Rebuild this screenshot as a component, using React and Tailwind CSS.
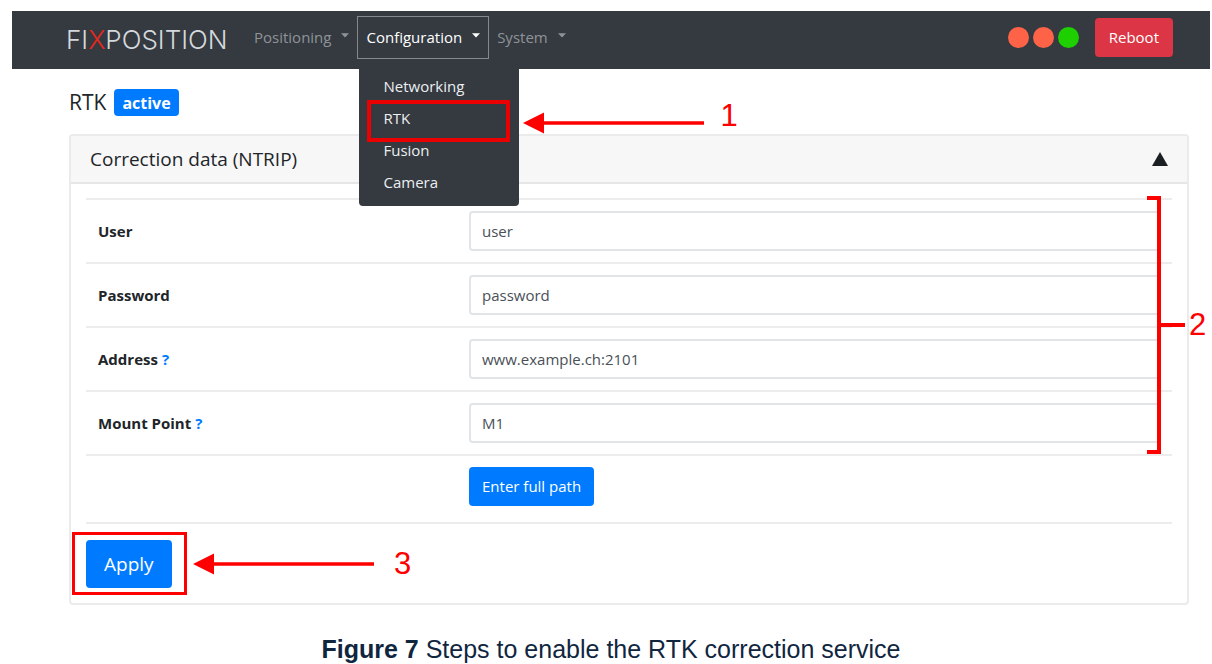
import React from "react";

const fields = [
  { id: "user", label: "User", value: "user" },
  { id: "password", label: "Password", value: "password" },
  { id: "address", label: "Address", value: "www.example.ch:2101", help: true },
  { id: "mount", label: "Mount Point", value: "M1", help: true },
];

function Caret() {
  return (
    <svg width="8" height="5" viewBox="0 0 8 5" fill="currentColor" aria-hidden="true" className="mb-1">
      <path d="M0 0.3h8L4 4.6z" />
    </svg>
  );
}

function Arrow() {
  return (
    <svg width="181" height="22" viewBox="0 0 181 22" fill="#fe0000" aria-hidden="true" className="shrink-0">
      <path d="M0 11L21 0.5V9.2H181V12.8H21V21.5z" />
    </svg>
  );
}

function StepNumber({ children }) {
  return <span className="font-['Liberation_Sans',sans-serif] text-[31px] leading-8 text-[#fe0000]">{children}</span>;
}

function NavBar() {
  return (
    <nav className="flex h-[58px] items-center bg-[#343a40] pr-[37px] pb-[5px] pl-[54px] text-[15px]">
      <a href="#home" className="w-[180px] pt-1 font-['Inter',sans-serif] text-[26px] leading-8 font-light text-[#d5d8dc]">
        FI<span className="text-[#e8281e]">X</span>POSITION
      </a>
      <button className="flex h-[43px] items-center gap-2.5 px-2 text-[#8f9397]">
        Positioning <Caret />
      </button>
      <div className="relative">
        <button className="flex h-[43px] items-center gap-2.5 border border-[#85898d] px-2 text-white" aria-expanded="true">
          Configuration <Caret />
        </button>
        <ul className="absolute top-[46px] left-0.5 z-10 w-40 rounded-sm bg-[#343a40] py-2 text-[#eceef0]">
          <li><a href="#networking" className="block px-6 leading-8">Networking</a></li>
          <li className="relative">
            <a href="#rtk" className="block px-6 leading-8">RTK</a>
            <div className="absolute -top-0.5 left-2 h-[42px] w-[143px] border-4 border-[#ea0000]" />
            <div className="absolute -top-0.5 left-full ml-1 flex items-start gap-4">
              <div className="pt-3"><Arrow /></div>
              <StepNumber>1</StepNumber>
            </div>
          </li>
          <li><a href="#fusion" className="block px-6 leading-8">Fusion</a></li>
          <li><a href="#camera" className="block px-6 leading-8">Camera</a></li>
        </ul>
      </div>
      <button className="flex h-[43px] items-center gap-2.5 px-2 text-[#8f9397]">
        System <Caret />
      </button>
      <div className="ml-auto flex items-center gap-1">
        <span className="size-[21px] rounded-full bg-[#ff6347]" />
        <span className="size-[21px] rounded-full bg-[#ff6347]" />
        <span className="size-[21px] rounded-full bg-[#1fd000]" />
        <button className="ml-3 h-[39px] rounded bg-[#dc3545] px-[14px] text-white">Reboot</button>
      </div>
    </nav>
  );
}

function Bracket() {
  return (
    <div className="absolute top-0 right-0 -mt-0.5 -mr-[33px] flex h-[258px] items-center">
      <div className="h-full w-[14px] border-y-4 border-r-4 border-[#fe0000]" />
      <div className="h-1 w-6 bg-[#fe0000]" />
      <div className="w-5 pl-1"><StepNumber>2</StepNumber></div>
    </div>
  );
}

export default function App() {
  return (
    <div className="bg-white pt-[11px] pr-0.5 pl-3 font-['Open_Sans','Noto_Sans',sans-serif] text-[15px] text-[#212529]">
      <NavBar />
      <main className="pr-[21px] pl-[57px]">
        <h1 className="flex h-[65px] items-center gap-2 pt-0.5 text-[21px]">
          RTK
          <span className="flex h-[27px] items-center rounded bg-[#007bff] px-2 text-base font-bold text-white">active</span>
        </h1>
        <section className="rounded border-2 border-[#ebebeb] bg-white">
          <header className="flex h-12 items-center justify-between border-b-2 border-[#e6e6e6] bg-[#f7f7f7] px-[19px] text-[19px]">
            <h2>Correction data (NTRIP)</h2>
            <button aria-label="Collapse">
              <svg width="16" height="14" viewBox="0 0 16 14" fill="#1c1f22" aria-hidden="true"><path d="M8 0l8 14H0z" /></svg>
            </button>
          </header>
          <form className="px-[15px] pt-[14px] pb-[15px]" onSubmit={(e) => e.preventDefault()}>
            <div className="relative">
              <table className="w-full">
                <tbody>
                  {fields.map((f) => (
                    <tr key={f.id} className="h-16 border-t-2 border-[#ececec]">
                      <th className="w-[371px] pl-3 text-left font-bold" scope="row">
                        <label htmlFor={f.id}>{f.label}</label>
                        {f.help && <a href={"#help-" + f.id} className="ml-1 text-[#007bff]">?</a>}
                      </th>
                      <td className="py-0 pr-3 pl-3">
                        <input id={f.id} defaultValue={f.value} className="block h-10 w-full rounded border-2 border-[#e2e5e8] px-[11px] text-[#495057]" />
                      </td>
                    </tr>
                  ))}
                  <tr className="h-[68px] border-y-2 border-[#ececec]">
                    <td />
                    <td className="pb-1.5 pl-3">
                      <button type="button" className="h-[39px] rounded-sm bg-[#007bff] px-[13px] text-white">Enter full path</button>
                    </td>
                  </tr>
                </tbody>
              </table>
              <Bracket />
            </div>
            <div className="relative mt-4 flex items-center">
              <button type="submit" className="h-12 rounded bg-[#007bff] px-[18px] text-[19px] text-white">Apply</button>
              <div className="absolute -top-2 -left-3.5 flex items-center gap-1.5">
                <div className="h-[63px] w-[115px] border-[3px] border-[#fe0000]" />
                <Arrow />
                <div className="ml-3.5"><StepNumber>3</StepNumber></div>
              </div>
            </div>
          </form>
        </section>
      </main>
      <p className="mt-7 text-center font-['Liberation_Sans',sans-serif] text-[25px] leading-8 text-[#10263f]">
        <b>Figure 7</b> Steps to enable the RTK correction service
      </p>
    </div>
  );
}
